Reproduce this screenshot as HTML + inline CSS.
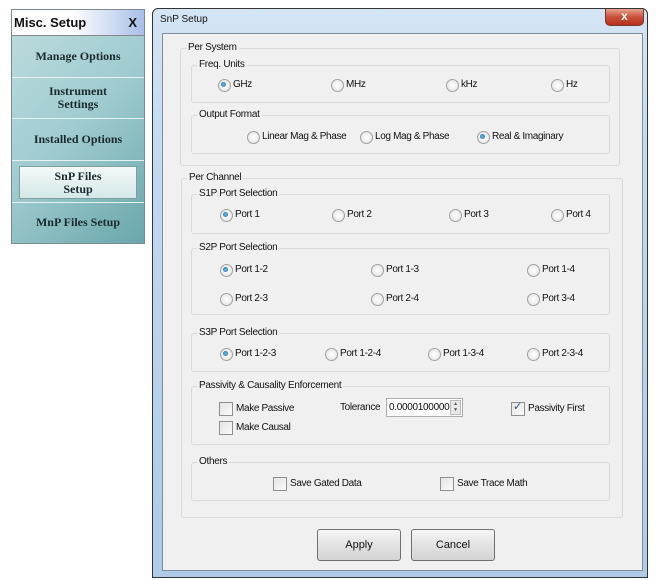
<!DOCTYPE html>
<html><head><meta charset="utf-8"><style>
*{box-sizing:border-box;margin:0;padding:0}
body{width:657px;height:580px;background:#fff;position:relative;overflow:hidden;font-family:"Liberation Sans",sans-serif;font-size:10px;color:#111}
.a{position:absolute}
#lp{left:11px;top:9px;width:134px;height:235px;border:1px solid #7a8c90;background:linear-gradient(135deg,#bfdde0 0%,#9fcbcf 50%,#6aa7ab 100%)}
#lt{left:0;top:0;width:132px;height:26px;background:linear-gradient(90deg,#fff 0%,#fff 45%,#a8bfe8 100%);border-bottom:1px solid #888;font-weight:bold;font-size:13px;padding:5px 0 0 2px}
#lt span{position:absolute;right:7px;top:5px}
.lb{position:absolute;left:0;width:132px;text-align:center;font-family:"Liberation Serif",serif;font-weight:bold;font-size:12px;color:#1b2a2e;line-height:13px;border-bottom:1px solid #e6f2f2}
#dlg{left:152px;top:8px;width:496px;height:570px;border:1px solid #333;border-radius:6px 6px 0 0;background:linear-gradient(180deg,#d4e5f4 0%,#c2d8ee 30%,#b0cbe6 100%)}
#cl{left:9px;top:24px;width:481px;height:538px;background:#f0f0f0;border:1px solid #7b8d9f}
#x{left:452px;top:0;width:39px;height:17px;border:1px solid #7a3a30;border-top:none;border-radius:0 0 5px 5px;background:linear-gradient(#e8a393,#c9503a 50%,#b6301c);color:#fff;font-weight:bold;text-align:center;font-size:12px;line-height:15px}
.g{position:absolute;border:1px solid #dadada;border-radius:3px}
.gl{position:absolute;top:-7px;left:5px;background:#f0f0f0;padding:0 2px;font-size:10px;letter-spacing:-0.3px;color:#111}
.r,.c{position:absolute;font-size:10px;letter-spacing:-0.35px;white-space:nowrap;line-height:13px}
.r::before{content:"";position:absolute;left:-15px;top:1px;width:11px;height:11px;border-radius:50%;border:1px solid #a0a0a0;background:radial-gradient(#fff,#e0e0e0)}
.r.on::after{content:"";position:absolute;left:-12px;top:4px;width:5px;height:5px;border-radius:50%;background:radial-gradient(#6fc0ec,#1b5f9a)}
.c::before{content:"";position:absolute;left:-17px;top:0;width:12px;height:12px;border:1px solid #8f8f8f;background:linear-gradient(135deg,#e4e4e4,#fafafa)}
.c.on::after{content:"✓";position:absolute;left:-15px;top:-1px;font-size:11px;color:#2a4f8a}
.btn{position:absolute;width:84px;height:32px;border:1px solid #707070;border-radius:3px;background:linear-gradient(#f6f6f6,#e3e3e3 50%,#d4d4d4);text-align:center;line-height:30px;font-size:11px}
</style></head><body>
<div id="lp" class="a">
<div id="lt" class="a">Misc. Setup<span>X</span></div>
<div class="lb" style="top:27px;height:41px;padding-top:13px">Manage Options</div>
<div class="lb" style="top:68px;height:41px;padding-top:7px">Instrument<br>Settings</div>
<div class="lb" style="top:109px;height:42px;padding-top:14px">Installed Options</div>
<div class="lb" style="top:151px;height:42px;padding-top:3px"><div style="margin:2px 7px;height:33px;border:1px solid #7f9ea0;background:linear-gradient(#f4f9f9,#d4e8e8);padding-top:3px">SnP Files<br>Setup</div></div>
<div class="lb" style="top:193px;height:40px;padding-top:13px;border:none">MnP Files Setup</div>
</div>
<div id="dlg" class="a">
<div class="a" style="left:7px;top:5px;font-size:10px">SnP Setup</div>
<div id="x" class="a">x</div>
<div id="cl" class="a"></div>
</div>
<div class="g" style="left:180px;top:48px;width:440px;height:118px"><span class="gl">Per System</span></div>
<div class="g" style="left:191px;top:65px;width:419px;height:38px"><span class="gl">Freq. Units</span></div>
<span class="r on" style="left:233px;top:78px">GHz</span>
<span class="r" style="left:346px;top:78px">MHz</span>
<span class="r" style="left:461px;top:78px">kHz</span>
<span class="r" style="left:566px;top:78px">Hz</span>
<div class="g" style="left:191px;top:115px;width:419px;height:39px"><span class="gl">Output Format</span></div>
<span class="r" style="left:262px;top:130px">Linear Mag &amp; Phase</span>
<span class="r" style="left:375px;top:130px">Log Mag &amp; Phase</span>
<span class="r on" style="left:492px;top:130px">Real &amp; Imaginary</span>

<div class="g" style="left:181px;top:178px;width:442px;height:340px"><span class="gl">Per Channel</span></div>
<div class="g" style="left:191px;top:194px;width:419px;height:40px"><span class="gl">S1P Port Selection</span></div>
<span class="r on" style="left:235px;top:208px">Port 1</span>
<span class="r" style="left:347px;top:208px">Port 2</span>
<span class="r" style="left:464px;top:208px">Port 3</span>
<span class="r" style="left:566px;top:208px">Port 4</span>
<div class="g" style="left:191px;top:248px;width:419px;height:67px"><span class="gl">S2P Port Selection</span></div>
<span class="r on" style="left:235px;top:263px">Port 1-2</span>
<span class="r" style="left:386px;top:263px">Port 1-3</span>
<span class="r" style="left:542px;top:263px">Port 1-4</span>
<span class="r" style="left:235px;top:292px">Port 2-3</span>
<span class="r" style="left:386px;top:292px">Port 2-4</span>
<span class="r" style="left:542px;top:292px">Port 3-4</span>
<div class="g" style="left:191px;top:333px;width:419px;height:39px"><span class="gl">S3P Port Selection</span></div>
<span class="r on" style="left:235px;top:347px">Port 1-2-3</span>
<span class="r" style="left:340px;top:347px">Port 1-2-4</span>
<span class="r" style="left:443px;top:347px">Port 1-3-4</span>
<span class="r" style="left:542px;top:347px">Port 2-3-4</span>
<div class="g" style="left:191px;top:386px;width:419px;height:59px"><span class="gl">Passivity &amp; Causality Enforcement</span></div>
<span class="c" style="left:236px;top:402px">Make Passive</span>
<span class="c" style="left:236px;top:421px">Make Causal</span>
<span class="a" style="left:340px;top:402px;font-size:10px;letter-spacing:-0.35px">Tolerance</span>
<div class="a" style="left:386px;top:398px;width:77px;height:19px;border:1px solid #abadb3;background:#fff;font-size:10px;letter-spacing:-0.3px;padding:3px 0 0 2px">0.0000100000<div class="a" style="right:1px;top:1px;width:11px;height:15px;background:#e8e8e8;border:1px solid #bbb;font-size:5px;line-height:6px;text-align:center;color:#555">▲<br>▼</div></div>
<span class="c on" style="left:528px;top:402px">Passivity First</span>
<div class="g" style="left:191px;top:462px;width:419px;height:39px"><span class="gl">Others</span></div>
<span class="c" style="left:290px;top:477px">Save Gated Data</span>
<span class="c" style="left:457px;top:477px">Save Trace Math</span>
<div class="btn" style="left:317px;top:529px">Apply</div>
<div class="btn" style="left:411px;top:529px">Cancel</div>
</body></html>
